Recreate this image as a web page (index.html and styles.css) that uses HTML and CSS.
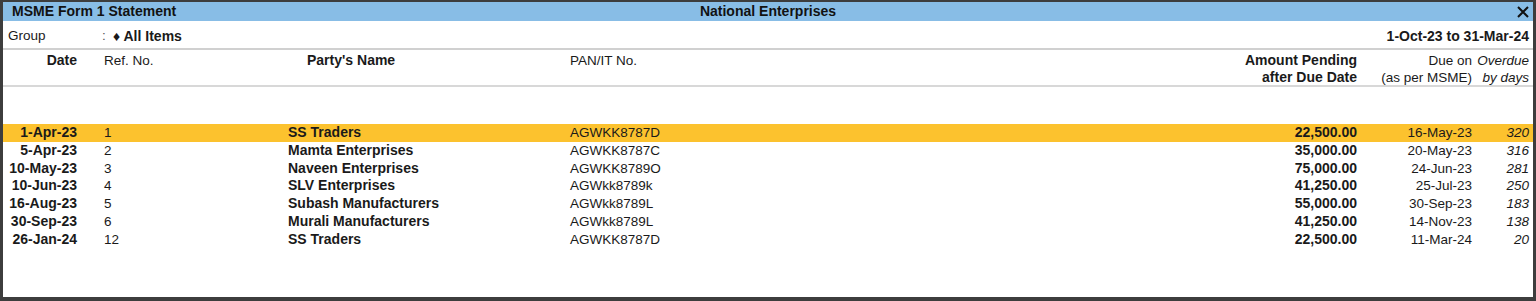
FILE: index.html
```html
<!DOCTYPE html>
<html>
<head>
<meta charset="utf-8">
<link rel="stylesheet" href="styles.css">
</head>
<body>
<div class="frame">
  <div class="titlebar">
    <div class="title-left">MSME Form 1 Statement</div>
    <div class="title-center">National Enterprises</div>
    <div class="title-right">
      <svg class="close" width="14" height="14" viewBox="0 0 14 14"><path d="M2 2 L12 12 M12 2 L2 12" stroke="#111" stroke-width="2" fill="none"/></svg>
    </div>
  </div>
  <div class="inforow">
    <div class="group-label">Group</div>
    <div class="group-colon">:</div>
    <div class="group-value">&#9830; All Items</div>
    <div class="period">1-Oct-23 to 31-Mar-24</div>
  </div>
  <div class="thead">
    <div class="c-date b">Date</div>
    <div class="c-ref">Ref. No.</div>
    <div class="c-party b hdr-party">Party's Name</div>
    <div class="c-pan">PAN/IT No.</div>
    <div class="c-amt b">Amount Pending<br>after Due Date</div>
    <div class="c-due">Due on<br>(as per MSME)</div>
    <div class="c-over i">Overdue<br>by days</div>
  </div>
  <div class="tbody">
    <div class="row selected">
      <div class="c-date b">1-Apr-23</div><div class="c-ref">1</div><div class="c-party b">SS Traders</div><div class="c-pan">AGWKK8787D</div><div class="c-amt b">22,500.00</div><div class="c-due">16-May-23</div><div class="c-over i">320</div>
    </div>
    <div class="row">
      <div class="c-date b">5-Apr-23</div><div class="c-ref">2</div><div class="c-party b">Mamta Enterprises</div><div class="c-pan">AGWKK8787C</div><div class="c-amt b">35,000.00</div><div class="c-due">20-May-23</div><div class="c-over i">316</div>
    </div>
    <div class="row">
      <div class="c-date b">10-May-23</div><div class="c-ref">3</div><div class="c-party b">Naveen Enterprises</div><div class="c-pan">AGWKK8789O</div><div class="c-amt b">75,000.00</div><div class="c-due">24-Jun-23</div><div class="c-over i">281</div>
    </div>
    <div class="row">
      <div class="c-date b">10-Jun-23</div><div class="c-ref">4</div><div class="c-party b">SLV Enterprises</div><div class="c-pan">AGWkk8789k</div><div class="c-amt b">41,250.00</div><div class="c-due">25-Jul-23</div><div class="c-over i">250</div>
    </div>
    <div class="row">
      <div class="c-date b">16-Aug-23</div><div class="c-ref">5</div><div class="c-party b">Subash Manufacturers</div><div class="c-pan">AGWkk8789L</div><div class="c-amt b">55,000.00</div><div class="c-due">30-Sep-23</div><div class="c-over i">183</div>
    </div>
    <div class="row">
      <div class="c-date b">30-Sep-23</div><div class="c-ref">6</div><div class="c-party b">Murali Manufacturers</div><div class="c-pan">AGWkk8789L</div><div class="c-amt b">41,250.00</div><div class="c-due">14-Nov-23</div><div class="c-over i">138</div>
    </div>
    <div class="row">
      <div class="c-date b">26-Jan-24</div><div class="c-ref">12</div><div class="c-party b">SS Traders</div><div class="c-pan">AGWKK8787D</div><div class="c-amt b">22,500.00</div><div class="c-due">11-Mar-24</div><div class="c-over i">20</div>
    </div>
  </div>
</div>
</body>
</html>
```
FILE: styles.css
```css
* { box-sizing: border-box; }
html, body { margin: 0; padding: 0; background: #ffffff; }
body {
  font-family: "Liberation Sans", Arial, sans-serif;
  color: #1a1a1a;
  font-size: 13.5px;
}
.frame {
  width: 1536px;
  height: 301px;
  border-style: solid;
  border-color: #3d3d3d;
  border-width: 2px 3px 4px 3px;
  background: #fff;
  display: flex;
  flex-direction: column;
}
.titlebar {
  height: 19px;
  background: #88bde6;
  display: grid;
  grid-template-columns: 1fr auto 1fr;
  align-items: center;
  font-weight: bold;
  font-size: 14px;
  color: #121212;
  line-height: 19px;
}
.title-left { padding-left: 9px; }
.title-center { text-align: center; }
.title-right { display: flex; justify-content: flex-end; padding-right: 3px; align-items: center; }
.close { display: block; }
.inforow {
  height: 29px;
  display: flex;
  align-items: center;
  padding-top: 2px;
  border-bottom: 2px solid #d0d0d0;
  padding-right: 4px;
}
.group-label { width: 99px; padding-left: 5px; }
.group-colon { width: 11px; color: #555; }
.group-value { font-weight: bold; font-size: 14px; }
.period { margin-left: auto; font-weight: bold; font-size: 14px; }
.thead, .row {
  display: grid;
  grid-template-columns: 101px 184px 282px 1fr 200px 115px 57px;
  padding-right: 4px;
}
.thead {
  padding-top: 2px;
  line-height: 17px;
  height: 37px;
  border-bottom: 2px solid #d8d8d8;
}
.tbody { padding-top: 37px; }
.row { height: 17.75px; line-height: 17.75px; }
.row.selected { background: #fcc22e; }
.b { font-weight: bold; font-size: 14px; }
.i { font-style: italic; }
.c-date { text-align: right; padding-right: 27px; }
.c-ref { padding-left: 0; }
.hdr-party { padding-left: 19px; }
.c-amt, .c-due, .c-over { text-align: right; }
```
